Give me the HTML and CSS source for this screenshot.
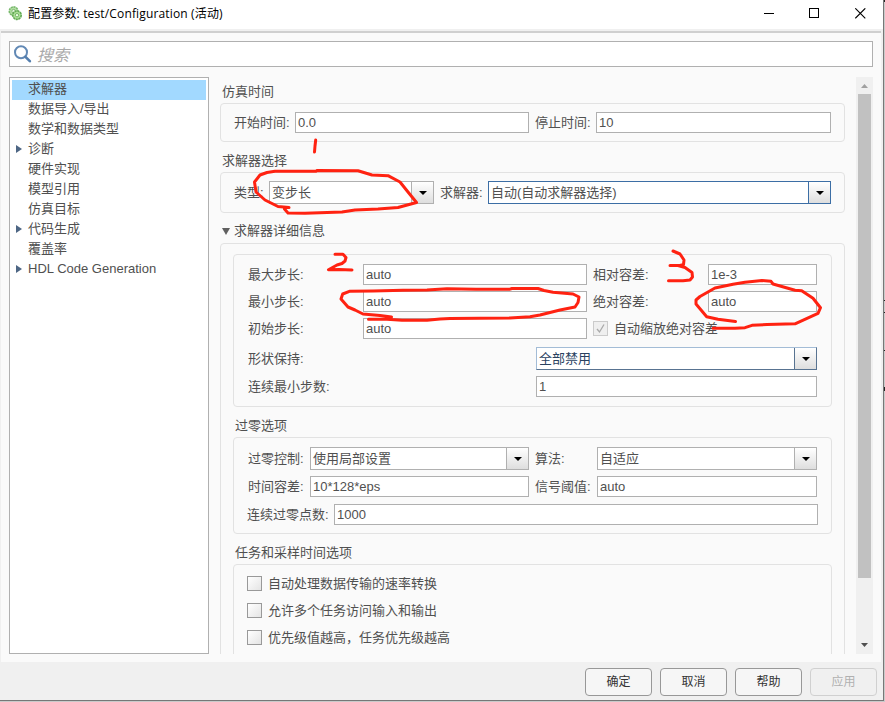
FILE: index.html
```
<!DOCTYPE html>
<html lang="zh-CN">
<head>
    <meta charset="UTF-8">
    <meta name="viewport" content="width=device-width, initial-scale=1.0">
    <title>配置参数: test/Configuration (活动)</title>
    <link rel="stylesheet" href="styles.css">
</head>
<body>
    <div class="window">
        <!-- Title bar -->
        <div class="titlebar">
            <svg class="app-icon" width="15" height="15" viewBox="0 0 15 15">
                <circle cx="5.6" cy="5.2" r="4.3" fill="#b5dfa6" stroke="#78b96c" stroke-width="1.6" stroke-dasharray="2.2 .6"/>
                <circle cx="5.6" cy="5.2" r="1.8" fill="#e8f6e1" stroke="#7fbb72"/>
                <circle cx="9" cy="9.2" r="4.2" fill="#b0e29b" stroke="#62aa55" stroke-width="1.6" stroke-dasharray="2.2 .6"/>
                <circle cx="9" cy="9.2" r="1.7" fill="#eefae8" stroke="#72b663"/>
            </svg>
            <span class="title">配置参数: test/Configuration (活动)</span>
            <div class="controls">
                <svg width="11" height="11" viewBox="0 0 11 11"><path d="M1 5.5h10" stroke="#000"/></svg>
                <svg width="11" height="11" viewBox="0 0 11 11"><rect x=".5" y=".5" width="9" height="9" fill="none" stroke="#000"/></svg>
                <svg width="11" height="11" viewBox="0 0 11 11"><path d="M.3 .3l10 10M10.3 .3l-10 10" stroke="#000" stroke-width="1.1"/></svg>
            </div>
        </div>

        <div class="content">
            <div class="search">
                <svg width="18" height="18" viewBox="0 0 18 18">
                    <circle cx="7" cy="7.3" r="6" fill="#fff" stroke="#6289b5" stroke-width="2"/>
                    <path d="M11.5 11.8l4.3 4.4" stroke="#557fae" stroke-width="2.6" stroke-linecap="round"/>
                </svg>
                <span class="placeholder">搜索</span>
            </div>

            <div class="columns">
                <ul class="tree">
                    <li class="active">求解器</li>
                    <li>数据导入/导出</li>
                    <li>数学和数据类型</li>
                    <li class="parent">诊断</li>
                    <li>硬件实现</li>
                    <li>模型引用</li>
                    <li>仿真目标</li>
                    <li class="parent">代码生成</li>
                    <li>覆盖率</li>
                    <li class="parent">HDL Code Generation</li>
                </ul>

                <div class="panel">
                    <div class="heading first">仿真时间</div>
                    <div class="group">
                        <div class="row">
                            <label class="w-start">开始时间:</label>
                            <div class="field w-234">0.0</div>
                            <label class="w-stop">停止时间:</label>
                            <div class="field grow">10</div>
                        </div>
                    </div>

                    <div class="heading">求解器选择</div>
                    <div class="group">
                        <div class="row">
                            <label class="w-type">类型:</label>
                            <div class="select w-165">变步长<i></i></div>
                            <label class="w-solver">求解器:</label>
                            <div class="select focus grow">自动(自动求解器选择)<i></i></div>
                        </div>
                    </div>

                    <div class="heading toggle">求解器详细信息</div>
                    <div class="group outer">
                        <div class="group steps">
                            <div class="row">
                                <label class="w-step">最大步长:</label>
                                <div class="field w-224">auto</div>
                                <label class="w-tol">相对容差:</label>
                                <div class="field grow">1e-3</div>
                            </div>
                            <div class="row">
                                <label class="w-step">最小步长:</label>
                                <div class="field w-224">auto</div>
                                <label class="w-tol">绝对容差:</label>
                                <div class="field grow">auto</div>
                            </div>
                            <div class="row">
                                <label class="w-step">初始步长:</label>
                                <div class="field w-224">auto</div>
                                <div class="check disabled">
                                    <svg width="15" height="15" viewBox="0 0 15 15"><path d="M4 8l2.5 3L11 3.5" fill="none" stroke="#a9a9a9" stroke-width="1.3"/></svg>
                                </div>
                                <span class="check-text">自动缩放绝对容差</span>
                            </div>
                            <div class="row shape">
                                <label class="w-shape">形状保持:</label>
                                <div class="select hover grow">全部禁用<i></i></div>
                            </div>
                            <div class="row">
                                <label class="w-shape">连续最小步数:</label>
                                <div class="field grow">1</div>
                            </div>
                        </div>

                        <div class="heading">过零选项</div>
                        <div class="group crossing">
                            <div class="row">
                                <label class="w-cross">过零控制:</label>
                                <div class="select w-219">使用局部设置<i></i></div>
                                <label class="w-algo">算法:</label>
                                <div class="select w-220">自适应<i></i></div>
                            </div>
                            <div class="row">
                                <label class="w-cross">时间容差:</label>
                                <div class="field w-219">10*128*eps</div>
                                <label class="w-algo">信号阈值:</label>
                                <div class="field w-220">auto</div>
                            </div>
                            <div class="row last">
                                <label class="w-count">连续过零点数:</label>
                                <div class="field grow">1000</div>
                            </div>
                        </div>

                        <div class="heading">任务和采样时间选项</div>
                        <div class="group tasks">
                            <div class="row"><div class="check"></div><span class="check-text">自动处理数据传输的速率转换</span></div>
                            <div class="row"><div class="check"></div><span class="check-text">允许多个任务访问输入和输出</span></div>
                            <div class="row"><div class="check"></div><span class="check-text">优先级值越高，任务优先级越高</span></div>
                        </div>
                    </div>
                </div>

                <div class="scrollbar">
                    <svg width="17" height="17" viewBox="0 0 17 17"><path d="M5 11l3.5-4 3.5 4z" fill="#a0a0a0"/></svg>
                    <div class="thumb"></div>
                    <svg width="17" height="17" viewBox="0 0 17 17"><path d="M5 6l3.5 4 3.5-4z" fill="#505050"/></svg>
                </div>
            </div>
        </div>

        <div class="footer">
            <button>确定</button>
            <button>取消</button>
            <button>帮助</button>
            <button disabled>应用</button>
        </div>
    </div>

    <!-- Pen marks -->
    <svg class="marks" width="885" height="702" viewBox="0 0 885 702">
        <path d="M884.5 0v2M884.5 300v1M884.5 312v1M884.5 350v1M884.5 387v4" stroke="#222"/>
        <g fill="none" stroke="#ff2211" stroke-width="3" stroke-linecap="round" stroke-linejoin="round">
            <path d="M315.7 140L315 146L314.5 152"/>
            <path d="M289 207.5L278 206.5L265 200L256 192L254.5 182L260 175L267 172.5L275 171.3L316 171.3L317 170.5L358 170.7L372 175L388 175.7L400 182L408 192L416.5 202.5L398 207.5L378 209L355 210L342 212L305 213.3L288 213L284.5 209"/>
            <path d="M335 254.3H343L346 257.5L345 261L342 263.5L337 265L328.5 269.7L339 269.5L352 270"/>
            <path d="M391.5 317L380 315.5L363 314L355 310L348 307L341 299L342.7 294L350 291.2L373 291L403 290.3L427 290L447 288.7L476 289.2L510 289.2L512 288.5H538L544 290.5L553 292.2L573 294L579 297L578 302.5L575 307L560 310L540 315L530 316.7L510 318L450 318.5L440 319L427 320.3L402 320.3L387 319.3H368.5"/>
            <path d="M673 251L680 254L684 260L683.5 264.5L680 265.5H670M678 265.5L685 267.5L692 272.5L692.5 277L690 280L683 280.7H668.5"/>
            <path d="M735.5 321.5L718 319.3L706.7 316.7L696 304L696 300L700 296.5L715 288L733 284.3L745 282.2L762 280.6L771 281.3L773 284L795 290.3L801.7 290.7L813 298.3L820.5 307.7L818 313.3L795 323.8L767 324.5L752 325.3L745 327.7L735 328.3H713"/>
        </g>
    </svg>
</body>
</html>
```
FILE: styles.css
```
* {
    box-sizing: border-box;
}
body {
    margin: 0;
    width: 885px;
    height: 702px;
    overflow: hidden;
    background-color: #cacaca;
    font-family: "Liberation Sans", "Noto Sans CJK SC", sans-serif;
    font-size: 13px;
    line-height: 20px;
    color: #505050;
}
.window {
    width: 884px;
    height: 701px;
    border-right: 1px solid #777;
    border-bottom: 1px solid #777;
    background-color: #f0f0f0;
    display: flex;
    flex-direction: column;
}
.titlebar {
    height: 29px;
    flex-shrink: 0;
    padding: 0 17px 2px 8px;
    background-color: #fff;
    display: flex;
    align-items: center;
}
.title {
    margin-left: 5px;
    color: #000;
    font-family: "Open Sans", "Noto Sans CJK SC", sans-serif;
    font-size: 12px;
    letter-spacing: 0.15px;
}
.controls {
    margin-left: auto;
    display: flex;
    gap: 35px;
}
.controls svg {
    display: block;
}
.content {
    height: 631px;
    margin: 2px 2px 0 1px;
    padding: 8px 8px 0;
    border-top: 2px solid #cfcfcf;
    background-color: #fafafa;
}
.search {
    height: 26px;
    border: 1px solid #b0b0b0;
    background-color: #fff;
    display: flex;
    align-items: center;
    padding-left: 4px;
}
.placeholder {
    margin-left: 5px;
    padding-top: 3px;
    font-size: 16px;
    font-style: italic;
    color: #a9a9a9;
}
.columns {
    display: flex;
    height: 577px;
    margin-top: 10px;
}

/* Left tree */
.tree {
    width: 200px;
    margin: 0;
    padding: 2px;
    list-style: none;
    border: 1px solid #b0b0b0;
    background-color: #fff;
}
.tree li {
    height: 20px;
    padding-left: 16px;
    line-height: 18px;
    white-space: nowrap;
}
.tree .active {
    background-color: #a2d9ff;
}
.tree .parent {
    display: flex;
    padding-left: 4px;
}
.tree .parent::before {
    content: "";
    margin: 5px 6px 0 0;
    height: 0;
    border-left: 6px solid #4d6684;
    border-top: 4px solid transparent;
    border-bottom: 4px solid transparent;
}

/* Right panel */
.panel {
    width: 625px;
    margin: 0 11px;
    overflow: hidden;
}
.heading {
    height: 30px;
    padding: 6px 0 0 2px;
    line-height: 26px;
}
.heading.first {
    height: 26px;
    padding-top: 2px;
}
.toggle {
    display: flex;
    align-items: center;
}
.toggle::before {
    content: "";
    margin-right: 4px;
    border-top: 7px solid #606060;
    border-left: 4px solid transparent;
    border-right: 4px solid transparent;
}
.group {
    border: 1px solid #e2e2e2;
    border-radius: 4px;
    padding: 8px 13px;
}
.outer {
    height: 500px;
    padding: 10px 12px;
}
.steps {
    padding: 9px 14px;
}
.crossing {
    padding: 9px 13px 8px;
}
.row {
    display: flex;
    align-items: center;
}
.steps .row + .row,
.crossing .row + .row {
    margin-top: 6px;
}
.steps .row.shape {
    margin-top: 8px;
}
.crossing .row.last {
    margin-top: 7px;
}
label {
    flex-shrink: 0;
    white-space: nowrap;
}
.field,
.select {
    height: 21px;
    border: 1px solid #b0b0b0;
    background-color: #fff;
    padding-left: 2px;
    line-height: 19px;
    white-space: nowrap;
}
.select {
    height: 23px;
    display: flex;
    justify-content: space-between;
    line-height: 22px;
}
.select i {
    width: 22px;
    border-left: 1px solid #b0b0b0;
    background: linear-gradient(#fff, #dedede);
    display: flex;
    align-items: center;
    justify-content: center;
}
.select i::before {
    content: "";
    border-top: 4px solid #000;
    border-left: 4px solid transparent;
    border-right: 4px solid transparent;
}
.focus {
    border-color: #3c6ea5;
}
.focus i {
    border-color: #3c6ea5;
}
.hover {
    border-color: #a3bcd6 #587391 #587391 #a3bcd6;
    color: #29415f;
}
.hover i {
    border-color: #587391;
}
.grow { flex: 1; }
.w-234 { width: 234px; }
.w-224 { width: 224px; }
.w-219 { width: 219px; }
.w-220 { width: 220px; }
.w-165 { width: 165px; }
.w-start { width: 61px; }
.w-stop { width: 67px; padding-left: 6px; }
.w-type { width: 35px; }
.w-solver { width: 54px; padding-left: 6px; }
.w-step { width: 115px; }
.w-tol { width: 121px; padding-left: 6px; }
.w-shape { width: 288px; }
.w-cross { width: 63px; padding-left: 1px; }
.w-algo { width: 68px; padding-left: 6px; }
.w-count { width: 87px; }

.check {
    width: 15px;
    height: 15px;
    border: 1px solid #999;
    background: linear-gradient(135deg, #fff, #e4e4e4);
}
.check.disabled {
    margin-left: 6px;
    border-color: #cbcbcb;
    background: #efefef;
}
.check.disabled svg {
    display: block;
    margin: -1px;
}
.check-text {
    margin-left: 6px;
    white-space: nowrap;
}
.tasks {
    height: 120px;
    padding-top: 5px;
}
.tasks .row {
    height: 27px;
}

.scrollbar {
    width: 17px;
    background-color: #f0f0f0;
    display: flex;
    flex-direction: column;
    align-items: center;
}
.scrollbar svg {
    display: block;
}
.thumb {
    width: 13px;
    height: 484px;
    margin-bottom: auto;
    background-color: #c1c1c1;
}

.footer {
    display: flex;
    justify-content: flex-end;
    gap: 8px;
    padding: 6px 6px 0 0;
}
button {
    width: 67px;
    height: 28px;
    padding: 0;
    border: 1px solid #989898;
    border-radius: 4px;
    background-color: #f6f6f6;
    color: #333;
    font-family: inherit;
    font-size: 12px;
    line-height: 24px;
}
button:disabled {
    border-color: #d0d0d0;
    background-color: #f0f0f0;
    color: #b0b0b0;
}

/* Red pen drawn over the dialog */
.marks {
    position: absolute;
    top: 0;
    left: 0;
    pointer-events: none;
}
```
